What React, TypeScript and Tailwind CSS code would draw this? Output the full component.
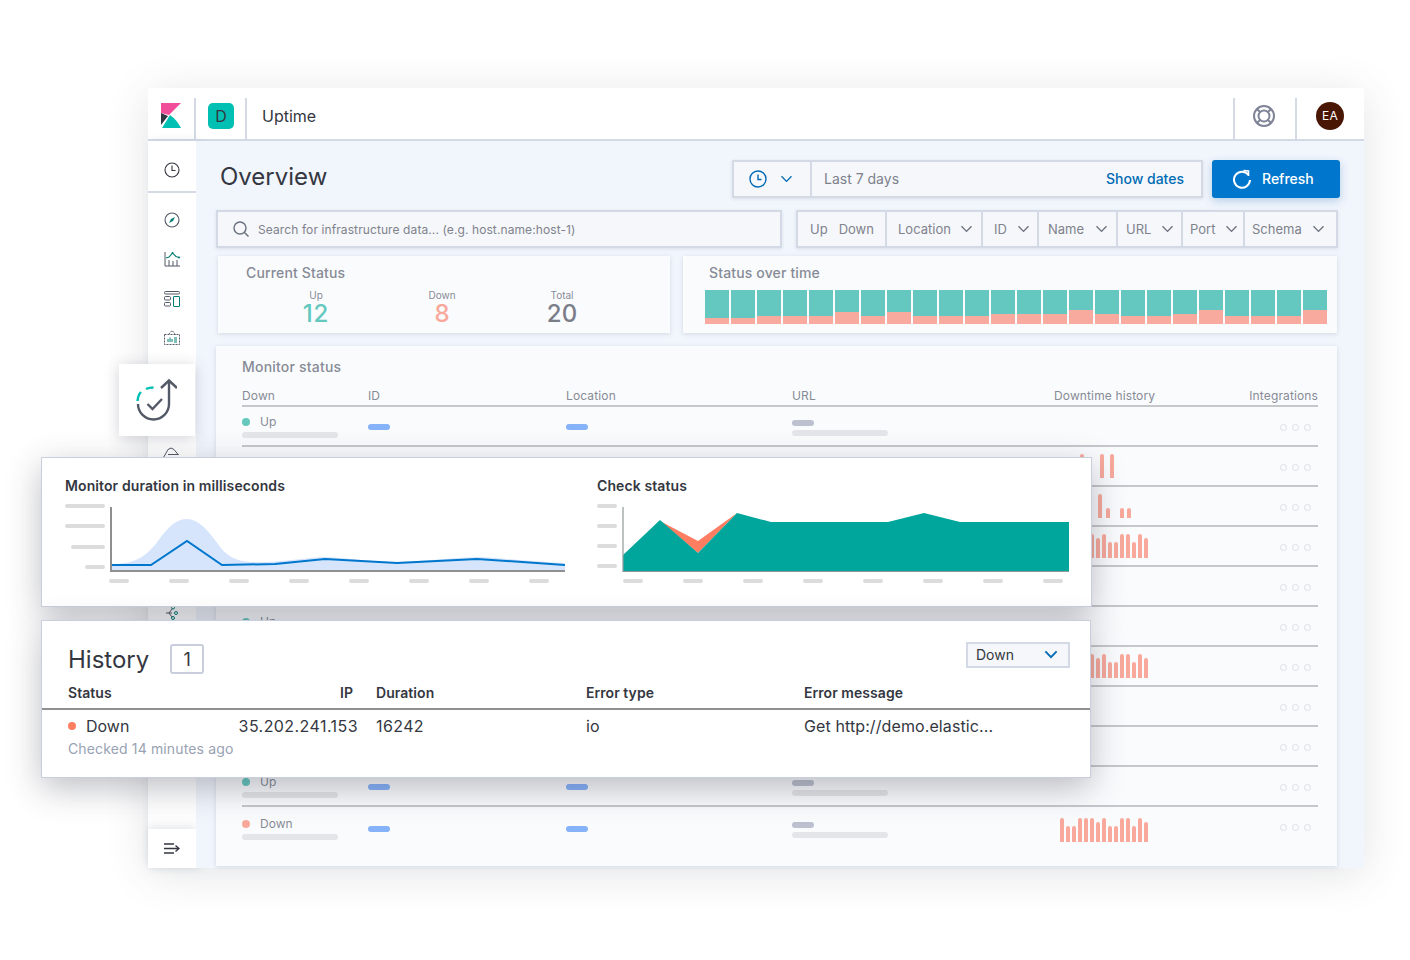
import React from "react";

const BURST = [24, 16, 16, 24, 24, 24, 20, 24, 16, 16, 24, 24, 16, 24, 20];
const PINK = BURST.map((h, i) => ({ x: 1060 + i * 6, h }));

type Row = { s: "Up" | "Down"; bars?: { x: number; h: number }[]; last?: boolean };
const ROWS: Row[] = [
  { s: "Up" },
  { s: "Down", bars: [{ x: 1080, h: 24 }, { x: 1100, h: 24 }, { x: 1110, h: 24 }] },
  { s: "Down", bars: [{ x: 1098, h: 24 }, { x: 1106, h: 10 }, { x: 1120, h: 10 }, { x: 1127, h: 10 }] },
  { s: "Down", bars: PINK },
  { s: "Up" },
  { s: "Up" },
  { s: "Down", bars: PINK },
  { s: "Up" },
  { s: "Up" },
  { s: "Up" },
  { s: "Down", bars: PINK, last: true },
];

const STATUS = [6, 6, 8, 8, 8, 12, 8, 12, 8, 8, 8, 10, 10, 10, 14, 10, 8, 8, 10, 14, 8, 8, 8, 14];

function Chevron({ className = "text-[#69707d]", bold = false }: { className?: string; bold?: boolean }) {
  return (
    <svg width={bold ? 14 : 13} height={bold ? 9 : 8} viewBox="0 0 12 8" fill="none" className={className}>
      <path d="M1 1.2 6 6.4l5-5.2" stroke="currentColor" strokeWidth={bold ? 1.7 : 1.3} />
    </svg>
  );
}

function SideIcon({ k }: { k: number }) {
  const dark = "#535966";
  const teal = "#017d73";
  const common = { width: 18, height: 18, viewBox: "0 0 18 18", fill: "none" };
  if (k === 0)
    return (
      <svg {...common}>
        <circle cx="9" cy="9" r="7" stroke={dark} strokeWidth="1.1" />
        <path d="M12 6 10 10 6 12 8 8Z" fill={teal} />
      </svg>
    );
  if (k === 1)
    return (
      <svg {...common}>
        <path d="M2 2v14h15" stroke={dark} strokeWidth="1" />
        <path d="M6 16v-6M10 16v-5M14 16v-6" stroke={dark} strokeWidth="1" />
        <path d="M3 8l3-1 3.5-4 3.5 3.5 3 1" stroke={teal} strokeWidth="1.1" />
        <circle cx="9.5" cy="3" r="1" fill={teal} />
        <circle cx="16" cy="7.5" r="1" fill={teal} />
      </svg>
    );
  if (k === 2)
    return (
      <svg {...common}>
        <rect x="1.5" y="1.5" width="15" height="2.5" rx="1" stroke={dark} />
        <rect x="1.5" y="6.5" width="6" height="3.5" rx="1" stroke={dark} />
        <rect x="1.5" y="12.5" width="6" height="3.5" rx="1" stroke={dark} />
        <rect x="10.5" y="6.5" width="6" height="10" rx="0.5" stroke={teal} />
      </svg>
    );
  if (k === 3)
    return (
      <svg {...common}>
        <path d="M1.5 5.5h15v10h-15zM5.5 5.5 9 1.5l3.5 4" stroke={dark} strokeDasharray="2 1" />
        <path d="M5 13V10M7 13V8.5M9 13V10" stroke={teal} />
        <path d="M11 9h3M11 11h3M11 13h3" stroke={teal} />
      </svg>
    );
  if (k === 6)
    return (
      <svg {...common}>
        <path d="M0.5 10.5 5 2.5Q8 -0.5 11 2.5L15.5 8" stroke={dark} />
        <path d="M5 7.5H15.5" stroke={dark} />
        <path d="M3 11h12v4H3z" stroke={dark} />
      </svg>
    );
  if (k === 10)
    return (
      <svg {...common}>
        <path d="M3 8h6M6 8l3-4M6 8l3 4" stroke={dark} />
        <circle cx="10" cy="2.5" r="1.5" stroke={teal} />
        <circle cx="13" cy="8" r="1.5" stroke={teal} />
        <circle cx="10" cy="13" r="1.5" stroke={teal} />
      </svg>
    );
  return (
    <svg {...common}>
      <rect x="2.5" y="2.5" width="13" height="13" stroke={dark} />
    </svg>
  );
}

function Filter({ label, w, pl, pr = "pr-[7px]" }: { label: string; w: string; pl: string; pr?: string }) {
  return (
    <div className={`${w} ${pl} ${pr} flex items-center justify-between border-r-2 border-[#d3dae6]`}>
      <span className="pt-[1px]">{label}</span>
      <Chevron />
    </div>
  );
}

function MonitorRow({ r }: { r: Row }) {
  const up = r.s === "Up";
  return (
    <div className={`grid h-[40px] grid-cols-[126px_198px_226px_268px_1fr_auto] ${r.last ? "pt-[9px]" : "border-b-2 border-[#c5c7cb] pt-[7px]"}`}>
      <div>
        <div className="flex h-[16px] items-center gap-[10px] text-[12px] leading-[16px] text-[#878b96]">
          <span className={`h-[8px] w-[8px] rounded-full ${up ? "bg-[#64c8bf]" : "bg-[#f8a99c]"}`} />
          {r.s}
        </div>
        <div className="mt-[2px] h-[6px] w-[96px] rounded-full bg-[#e4e5e8]" />
      </div>
      <div className="pt-[10px]">
        <div className="h-[6px] w-[22px] rounded-full bg-[#86b2fa]" />
      </div>
      <div className="pt-[10px]">
        <div className="h-[6px] w-[22px] rounded-full bg-[#86b2fa]" />
      </div>
      <div className="pt-[6px]">
        <div className="h-[6px] w-[22px] rounded-full bg-[#bcc0cf]" />
        <div className="mt-[4px] h-[6px] w-[96px] rounded-full bg-[#e4e5e8]" />
      </div>
      <div className={r.last ? "pt-[2px]" : ""}>
        <div className="flex h-[24px]">
          {(r.bars ?? []).map((b, i, a) => (
            <span
              key={i}
              className="w-[4px] self-end rounded-t-[2px] bg-[#f8a99c]"
              style={{ height: b.h, marginLeft: i === 0 ? b.x - 1060 : b.x - a[i - 1].x - 4 }}
            />
          ))}
        </div>
      </div>
      <div className={`flex gap-[5px] pr-[7px] ${r.last ? "pt-[8px]" : "pt-[10px]"}`}>
        {[0, 1, 2].map((i) => (
          <span key={i} className="h-[7px] w-[7px] rounded-full border border-[#dcdee3]" />
        ))}
      </div>
    </div>
  );
}

function Ticks({ x, y, w }: { x: number; y: number; w: number }) {
  return <rect x={x} y={y} width={w} height="4" rx="2" fill="#dcdcdc" />;
}

function Chart1() {
  return (
    <svg width="500" height="84" viewBox="65 502 500 84" className="mt-[6px]">
      <Ticks x={65} y={504} w={40} />
      <Ticks x={65} y={524} w={40} />
      <Ticks x={71} y={545} w={34} />
      <Ticks x={85} y={565} w={20} />
      {[109, 169, 229, 289, 349, 409, 469, 529].map((x) => (
        <Ticks key={x} x={x} y={579} w={20} />
      ))}
      <path
        d="M111 564C135 564 146 557 158 541C168 527 176 519 187 519C198 519 208 530 218 544C226 556 236 561 250 562C280 563 300 558 325 557C350 558 375 562 397 562C425 561 450 558 477 557C505 558 535 562 565 563V571H111Z"
        fill="#d6e5fc"
      />
      <polyline points="111,565 151,565 187,541 222,565 275,564 325,559 397,563 477,559 565,565" fill="none" stroke="#0077cc" strokeWidth="2" />
      <path d="M111 507V571H565" fill="none" stroke="#8f8f8f" strokeWidth="2" />
    </svg>
  );
}

function Chart2() {
  return (
    <svg width="472" height="84" viewBox="597 502 472 84" className="mt-[6px]">
      <Ticks x={597} y={504} w={20} />
      <Ticks x={597} y={524} w={20} />
      <Ticks x={597} y={544} w={20} />
      <Ticks x={597} y={564} w={20} />
      {[623, 683, 743, 803, 863, 923, 983, 1043].map((x) => (
        <Ticks key={x} x={x} y={579} w={20} />
      ))}
      <polygon points="660,521 698,553 737,513 698,541" fill="#ff7e62" />
      <polygon points="623,555 660,520 698,553 737,513 771,522 888,522 924,513 960,522 1069,522 1069,571 623,571" fill="#00a69b" />
      <path d="M623 507V571.5H1069" fill="none" stroke="#8f9a9a" strokeWidth="1.2" />
    </svg>
  );
}

export default function App() {
  return (
    <div className="relative h-[960px] w-[1410px] overflow-hidden bg-white pl-[148px] pt-[88px] font-[Inter,sans-serif] text-[#343741]">
      <div className="flex h-[780px] w-[1216px] flex-col bg-white shadow-[0_6px_40px_rgba(60,66,80,0.14)]">
        {/* header */}
        <header className="flex h-[53px] border-b-2 border-[#d3dae6] bg-white">
          <div className="flex w-[48px] items-start border-r-2 border-[#d3dae6] [border-image:linear-gradient(transparent_21%,#d3dae6_21%)_1] pl-[13px] pt-[15px]">
            <svg width="20" height="25" viewBox="0 0 20 25">
              <path d="M0 0h20L8 12 0 10Z" fill="#f04e98" />
              <path d="M0 10l7 3-7 9Z" fill="#343741" />
              <path d="M1 25 9 12q7 5 11 13Z" fill="#00bfb3" />
            </svg>
          </div>
          <div className="flex w-[51px] items-start border-r-2 border-[#d3dae6] [border-image:linear-gradient(transparent_21%,#d3dae6_21%)_1] pl-[12px] pt-[15px]">
            <div className="flex h-[26px] w-[26px] items-center justify-center rounded-[5px] bg-[#00bfb3] text-[16px] text-[#343741]">D</div>
          </div>
          <div className="flex flex-1 items-center pl-[15px] pt-[5px] text-[16px]">Uptime</div>
          <div className="flex w-[64px] items-center justify-center border-x-2 border-[#d3dae6] [border-image:linear-gradient(transparent_21%,#d3dae6_21%)_1] pr-[2px] pt-[5px]">
            <svg width="24" height="24" viewBox="0 0 24 24" fill="none" stroke="#7f8597" strokeWidth="2">
              <circle cx="12" cy="12" r="10" />
              <circle cx="12" cy="12" r="5.5" />
              <path d="M5 5l3.5 3.5M19 5l-3.5 3.5M5 19l3.5-3.5M19 19l-3.5-3.5" />
            </svg>
          </div>
          <div className="flex w-[67px] items-center pl-[19px] pt-[5px]">
            <div className="flex h-[28px] w-[28px] items-center justify-center rounded-full bg-[#4a1604] text-[12px] tracking-[0.3px] text-white">EA</div>
          </div>
        </header>

        <div className="flex flex-1">
          {/* sidebar */}
          <aside className="flex w-[48px] flex-col bg-white shadow-[3px_0_8px_rgba(152,162,179,0.25)]">
            <div className="flex h-[52px] items-center justify-center border-b-2 border-[#d3dae6] pt-[8px]">
              <svg width="18" height="18" viewBox="0 0 18 18" fill="none" stroke="#343741" strokeWidth="1.1">
                <circle cx="9" cy="9" r="7" />
                <path d="M9 4.5V9.5H12.5" />
              </svg>
            </div>
            <div className="flex flex-col items-center gap-[21.4px] pt-[18px]">
              {[0, 1, 2, 3, 4, 5, 6, 7, 8, 9, 10].map((k) => (
                <SideIcon key={k} k={k} />
              ))}
            </div>
            <div className="mt-auto flex h-[39px] items-center justify-center bg-white pb-[1px] shadow-[0_-3px_8px_rgba(152,162,179,0.25)]">
              <svg width="16" height="11" viewBox="0 0 16 11" fill="none" stroke="#343741" strokeWidth="1.4">
                <path d="M0 1h10M0 5.5h14.5M0 10h10M11.5 2.5 15 5.5l-3.5 3" />
              </svg>
            </div>
          </aside>

          {/* main */}
          <main className="min-w-0 flex-1 bg-[#f1f5fc] pl-[20px] pr-[24px] pt-[19px]">
            <div className="flex h-[38px] items-center">
              <h1 className="ml-[4px] flex-1 pb-[4px] text-[24px] leading-[32px] text-[#343741]">Overview</h1>
              <div className="flex h-[38px] w-[471px] border-2 border-[#d3dae6] bg-[#f5f7fa] text-[14px] shadow-[0_1px_3px_rgba(152,162,179,0.25)]">
                <div className="flex w-[78px] items-center gap-[13px] border-r-2 border-[#d3dae6] pl-[15px] text-[#006bb4]">
                  <svg width="18" height="18" viewBox="0 0 18 18" fill="none" stroke="currentColor" strokeWidth="1.4">
                    <circle cx="9" cy="9" r="8" />
                    <path d="M9 4.5V9.5H12.5" />
                  </svg>
                  <Chevron className="text-[#006bb4]" />
                </div>
                <div className="flex flex-1 items-center justify-between pb-[1px] pl-[12px] pr-[17px]">
                  <span className="text-[#7d818c]">Last 7 days</span>
                  <span className="font-medium text-[#006bb4]">Show dates</span>
                </div>
              </div>
              <button className="ml-[9px] flex h-[38px] w-[128px] items-center rounded-[3px] bg-[#0077cc] pb-[1px] pl-[20px] text-[14px] font-medium text-white shadow-[0_3px_8px_rgba(0,100,180,0.25)]">
                <svg width="20" height="20" viewBox="0 0 20 20" fill="none" stroke="currentColor" strokeWidth="2" className="mr-[10px]">
                  <path d="M16.5 6A8 8 0 1 0 18 11" />
                  <path d="M11.5 1.5 16.5 2V7" strokeWidth="1.6" />
                </svg>
                Refresh
              </button>
            </div>

            <div className="mt-[12px] flex h-[38px] text-[#7f828c]">
              <div className="flex w-[566px] items-center border-2 border-[#d3dae6] bg-[#f5f7fa] pl-[15px] text-[12px] tracking-[0.1px] shadow-[0_1px_3px_rgba(152,162,179,0.25)]">
                <svg width="16" height="16" viewBox="0 0 16 16" fill="none" stroke="#69707d" strokeWidth="1.4" className="mr-[9px]">
                  <circle cx="7" cy="7" r="6" />
                  <path d="M11.5 11.5 15.5 15.5" />
                </svg>
                <span className="pt-[1px]">Search for infrastructure data... (e.g. host.name:host-1)</span>
              </div>
              <div className="ml-[14px] flex w-[542px] border-2 border-[#d3dae6] bg-[#f5f7fa] text-[13px] shadow-[0_1px_3px_rgba(152,162,179,0.25)]">
                <div className="flex w-[89px] items-center gap-[11px] border-r-2 border-[#d3dae6] pl-[12px] pt-[1px]">
                  <span>Up</span>
                  <span>Down</span>
                </div>
                <Filter label="Location" w="w-[96px]" pl="pl-[11px]" pr="pr-[8px]" />
                <Filter label="ID" w="w-[56px]" pl="pl-[11px]" />
                <Filter label="Name" w="w-[79px]" pl="pl-[9px]" pr="pr-[8px]" />
                <Filter label="URL" w="w-[65px]" pl="pl-[8px]" />
                <Filter label="Port" w="w-[62px]" pl="pl-[7px]" pr="pr-[5px]" />
                <div className="flex flex-1 items-center justify-between pl-[7px] pr-[11px]">
                  <span className="pt-[1px]">Schema</span>
                  <Chevron />
                </div>
              </div>
            </div>

            <div className="mt-[8px] flex h-[77px]">
              <section className="ml-[2px] w-[452px] bg-[#fafbfd] shadow-[0_1px_4px_rgba(152,162,179,0.35)]">
                <h2 className="pl-[28px] pt-[7px] text-[14px] font-medium leading-[20px] tracking-[0.15px] text-[#878b96]">Current Status</h2>
                <div className="mt-[6px] grid grid-cols-[196px_56px_184px] text-center text-[10px] leading-[12px] text-[#878b96]">
                  <div>
                    <div>Up</div>
                    <div className="text-[24px] font-medium leading-[26px] tracking-[1px] text-[#64c8bf]">12</div>
                  </div>
                  <div>
                    <div>Down</div>
                    <div className="text-[24px] font-medium leading-[26px] text-[#f8a99c]">8</div>
                  </div>
                  <div>
                    <div>Total</div>
                    <div className="text-[24px] font-medium leading-[26px] text-[#7b7e88]">20</div>
                  </div>
                </div>
              </section>
              <section className="ml-[13px] w-[654px] bg-[#fafbfd] pl-[22px] pr-[10px] shadow-[0_1px_4px_rgba(152,162,179,0.35)]">
                <h2 className="pl-[4px] pt-[7px] text-[14px] font-medium leading-[20px] tracking-[0.15px] text-[#878b96]">Status over time</h2>
                <div className="mt-[7px] flex gap-[2px]">
                  {STATUS.map((h, i) => (
                    <div key={i} className="flex h-[34px] w-[24px] flex-col bg-[#65c8c0]">
                      <div className="mt-auto bg-[#f8aa9e]" style={{ height: h }} />
                    </div>
                  ))}
                </div>
              </section>
            </div>

            <section className="mt-[13px] h-[520px] w-[1121px] bg-[#fafbfd] pl-[26px] pr-[19px] pt-[11px] shadow-[0_1px_4px_rgba(152,162,179,0.35)]">
              <h2 className="text-[14px] font-medium leading-[20px] tracking-[0.2px] text-[#878b96]">Monitor status</h2>
              <div className="mt-[10px] grid h-[20px] grid-cols-[126px_198px_226px_262px_1fr_auto] border-b-2 border-[#c5c7cb] text-[12px] leading-[18px] tracking-[0.13px] text-[#878b96]">
                <span>Down</span>
                <span>ID</span>
                <span>Location</span>
                <span>URL</span>
                <span>Downtime history</span>
                <span>Integrations</span>
              </div>
              {ROWS.map((r, i) => (
                <MonitorRow key={i} r={r} />
              ))}
            </section>
          </main>
        </div>
      </div>

      {/* floating tile */}
      <div className="absolute left-[119px] top-[364px] flex h-[72px] w-[76px] items-center justify-center bg-white pr-[4px] shadow-[0_2px_14px_rgba(60,66,80,0.22)]">
        <svg width="44" height="44" viewBox="133 378 44 44" fill="none" strokeWidth="2.4">
          <path d="M161 388 169 380.5 177 388" stroke="#535966" />
          <path d="M169 381V404A15.5 15.5 0 0 1 138 404" stroke="#535966" />
          <path d="M147.5 404 152.5 409 162 399" stroke="#535966" />
          <path d="M137.5 401Q138 395 141 392M146 389Q149 387.5 153.5 387.5" stroke="#00bfb3" />
        </svg>
      </div>

      {/* charts overlay */}
      <div className="absolute left-[41px] top-[457px] flex h-[150px] w-[1051px] border border-[#c9cede] bg-white pl-[23px] pt-[18px] shadow-[0_10px_32px_rgba(40,44,60,0.3)]">
        <div className="w-[532px]">
          <h3 className="text-[14px] font-semibold leading-[20px] tracking-[0.1px] text-[#343741]">Monitor duration in milliseconds</h3>
          <Chart1 />
        </div>
        <div>
          <h3 className="text-[14px] font-semibold leading-[20px] tracking-[0.1px] text-[#343741]">Check status</h3>
          <Chart2 />
        </div>
      </div>

      {/* history overlay */}
      <div className="absolute left-[41px] top-[620px] h-[158px] w-[1050px] border border-[#c9cede] bg-white pt-[20px] shadow-[0_10px_32px_rgba(40,44,60,0.3)]">
        <div className="flex h-[36px] items-center pl-[26px] pr-[20px]">
          <h2 className="pt-[1px] text-[24px] leading-[32px]">History</h2>
          <span className="ml-[21px] flex h-[30px] w-[34px] items-center justify-center rounded-[3px] border-2 border-[#c9cede] text-[18px]">1</span>
          <div className="mb-[8px] ml-auto flex h-[26px] w-[104px] items-center justify-between border-2 border-[#d3dae6] bg-[#f5f7fa] pb-[1px] pl-[8px] pr-[10px] text-[14px]">
            Down
            <Chevron className="text-[#006bb4]" bold />
          </div>
        </div>
        <div className="mt-[6px] grid h-[27px] grid-cols-[290px_210px_218px_1fr] border-b-2 border-[#909090] pl-[26px] text-[14px] font-semibold leading-[20px] tracking-[0.05px]">
          <div className="flex justify-between pr-[5px]">
            <span>Status</span>
            <span>IP</span>
          </div>
          <span className="pl-[18px]">Duration</span>
          <span className="pl-[18px]">Error type</span>
          <span className="pl-[18px]">Error message</span>
        </div>
        <div className="mt-[5px] grid grid-cols-[290px_210px_218px_1fr] pl-[26px] text-[16px] leading-[22px]">
          <div className="flex items-center justify-between">
            <span className="flex items-center gap-[10px]">
              <span className="h-[8px] w-[8px] rounded-full bg-[#ff7e62]" />
              Down
            </span>
            <span className="tracking-[0.43px]">35.202.241.153</span>
          </div>
          <span className="pl-[18px] tracking-[0.4px]">16242</span>
          <span className="pl-[18px]">io</span>
          <span className="pl-[18px] tracking-[0.1px]">Get http://demo.elastic...</span>
        </div>
        <div className="mt-[1px] pl-[26px] text-[14px] leading-[22px] tracking-[0.14px] text-[#98a2b3]">Checked 14 minutes ago</div>
      </div>
    </div>
  );
}
